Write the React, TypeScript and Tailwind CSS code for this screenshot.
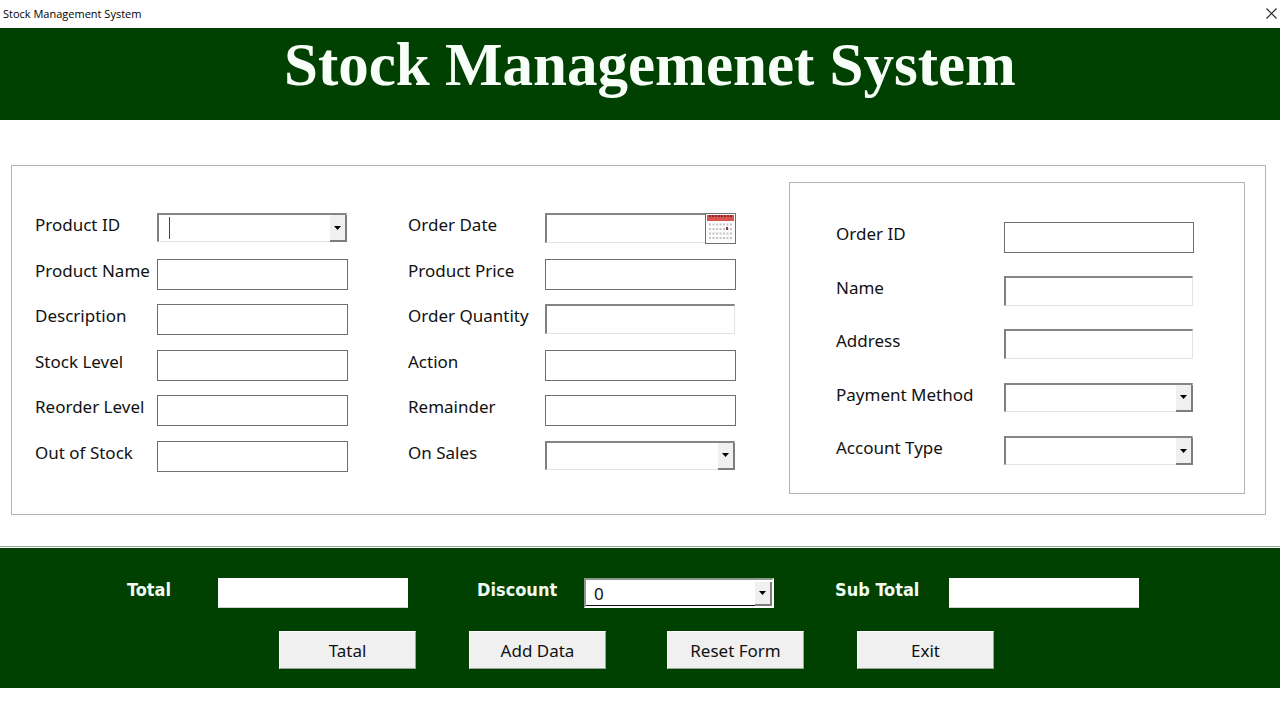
import type { ReactNode } from "react";

type Variant = "flat" | "sunken" | "select" | "date";

interface FieldDef {
  id: string;
  label: string;
  variant: Variant;
  caret?: boolean;
}

const productFields: FieldDef[] = [
  { id: "product-id", label: "Product ID", variant: "select", caret: true },
  { id: "product-name", label: "Product Name", variant: "flat" },
  { id: "description", label: "Description", variant: "flat" },
  { id: "stock-level", label: "Stock Level", variant: "flat" },
  { id: "reorder-level", label: "Reorder Level", variant: "flat" },
  { id: "out-of-stock", label: "Out of Stock", variant: "flat" },
];

const orderFields: FieldDef[] = [
  { id: "order-date", label: "Order Date", variant: "date" },
  { id: "product-price", label: "Product Price", variant: "flat" },
  { id: "order-quantity", label: "Order Quantity", variant: "sunken" },
  { id: "action", label: "Action", variant: "flat" },
  { id: "remainder", label: "Remainder", variant: "flat" },
  { id: "on-sales", label: "On Sales", variant: "select" },
];

const customerFields: FieldDef[] = [
  { id: "order-id", label: "Order ID", variant: "flat" },
  { id: "name", label: "Name", variant: "sunken" },
  { id: "address", label: "Address", variant: "sunken" },
  { id: "payment-method", label: "Payment Method", variant: "select" },
  { id: "account-type", label: "Account Type", variant: "select" },
];

const sunken =
  "border border-t-2 border-l-2 border-t-[#858585] border-l-[#808080] border-r-[#e3e3e3] border-b-[#e3e3e3]";

function DropArrow() {
  return (
    <span className="pointer-events-none absolute top-[2px] right-0 bottom-0 flex w-[17px] items-center justify-center border-r-2 border-b-2 border-[#7d7d7d] bg-[#f0f0f0]">
      <svg width="7" height="4" viewBox="0 0 7 4" aria-hidden="true">
        <path d="M0 0H7L3.5 4Z" fill="#000" />
      </svg>
    </span>
  );
}

function ComboBox({ id, caret }: { id: string; caret?: boolean }) {
  return (
    <div className="relative mr-px h-[29px]">
      <select id={id} className={`h-full w-full appearance-none bg-white px-2 outline-none ${sunken}`}>
        <option value=""></option>
      </select>
      {caret && <span className="pointer-events-none absolute top-1 left-3 h-[22px] w-px bg-[#444]" />}
      <DropArrow />
    </div>
  );
}

function CalendarIcon() {
  return (
    <svg width="29" height="29" viewBox="0 0 29 29" aria-hidden="true">
      <rect width="29" height="29" fill="#fdfdfd" />
      <rect x="1" y="1" width="27" height="6" fill="#d9534f" />
      <path d="M3 2H26" stroke="#8a2c2a" strokeWidth="2" strokeDasharray="2 1" />
      <path
        d="M3 10.5H27M3 15H27M3 19.5H27M3 24H27"
        stroke="#c4c4c4"
        strokeWidth="2"
        strokeDasharray="2 1.5"
      />
      <rect x="20" y="13" width="2" height="3" fill="#8a3a3a" />
    </svg>
  );
}

function DateBox({ id }: { id: string }) {
  return (
    <div className="flex h-[31px]">
      <input
        id={id}
        type="text"
        className="h-[30px] min-w-0 flex-1 border-t-2 border-b border-l-2 border-t-[#858585] border-b-[#e3e3e3] border-l-[#808080] bg-white px-2 outline-none"
      />
      <button type="button" aria-label="Pick a date" className="h-[31px] w-[31px] border border-[#6e6e6e] bg-white">
        <CalendarIcon />
      </button>
    </div>
  );
}

function Control({ id, variant, caret }: FieldDef) {
  if (variant === "select") return <ComboBox id={id} caret={caret} />;
  if (variant === "date") return <DateBox id={id} />;
  if (variant === "sunken") {
    return (
      <div className="pr-px">
        <input id={id} type="text" className={`block h-[30px] w-full bg-white px-2 outline-none ${sunken}`} />
      </div>
    );
  }
  return <input id={id} type="text" className="block h-[31px] w-full border border-[#6e6e6e] bg-white px-2 outline-none" />;
}

function FieldColumn({ fields, className }: { fields: FieldDef[]; className: string }) {
  return (
    <div className={`flex min-w-0 flex-col justify-between ${className}`}>
      {fields.map((field) => (
        <div key={field.id} className="flex h-[31px] items-start">
          <label htmlFor={field.id} className="w-(--label-w) shrink-0 leading-6 whitespace-nowrap">
            {field.label}
          </label>
          <div className="min-w-0 flex-1">
            <Control {...field} />
          </div>
        </div>
      ))}
    </div>
  );
}

function Summary({ id, label, labelClass, children }: { id: string; label: string; labelClass: string; children: ReactNode }) {
  return (
    <div className="flex min-w-0 items-start">
      <label
        htmlFor={id}
        className={`shrink-0 font-['DejaVu_Sans_Condensed','Noto_Sans',sans-serif] text-[18px] leading-6 font-bold whitespace-nowrap text-[#f1fbf1] ${labelClass}`}
      >
        {label}
      </label>
      {children}
    </div>
  );
}

const totalBox = "h-[30px] min-w-0 flex-1 border border-white border-b-[#c8d4c8] bg-white px-2 outline-none";
const actions = ["Tatal", "Add Data", "Reset Form", "Exit"];

export default function App() {
  return (
    <div className="min-h-screen bg-white font-['Noto_Sans',sans-serif] text-[17px] text-[#111]">
      <header className="flex h-7 items-center justify-between pr-[3px] pl-[3px] font-['Open_Sans',sans-serif] text-[11px] text-black">
        <span>Stock Management System</span>
        <button type="button" aria-label="Close" className="pb-[2px]">
          <svg width="11" height="11" viewBox="0 0 11 11" aria-hidden="true">
            <path d="M0.5 0.5L10.5 10.5M10.5 0.5L0.5 10.5" stroke="#222" strokeWidth="1.1" />
          </svg>
        </button>
      </header>

      <div className="h-[92px] bg-[#004000] pt-px pl-5 text-center">
        <h1 className="font-['Liberation_Serif',serif] text-[61px] leading-[72px] font-bold whitespace-nowrap text-[#f8fff8]">
          Stock Managemenet System
        </h1>
      </div>

      <form>
        <div className="mt-[45px] mr-[14px] mb-[31px] ml-[11px] grid grid-cols-[minmax(0,373fr)_minmax(0,381fr)_minmax(0,456fr)] border border-[#b4b4b4] pt-4 pr-5 pb-5 pl-[23px]">
          <FieldColumn fields={productFields} className="mt-[31px] mb-[22px] pr-[60px] [--label-w:122px]" />
          <FieldColumn fields={orderFields} className="mt-[31px] mb-[22px] pr-[53px] [--label-w:137px]" />
          <div className="h-[312px] border border-[#b4b4b4] pt-[39px] pr-[50px] pb-[26px] pl-[46px]">
            <FieldColumn fields={customerFields} className="h-full [--label-w:168px]" />
          </div>
        </div>

        <div className="border-t border-[#8fb08f] pt-px">
          <div className="bg-[#004000] pt-[30px] pb-[19px]">
            <div className="grid grid-cols-[minmax(0,350fr)_minmax(0,358fr)_minmax(0,304fr)] pr-[141px] pl-[127px]">
              <div className="pr-[69px]">
                <Summary id="total" label="Total" labelClass="w-[91px]">
                  <input id="total" type="text" className={totalBox} />
                </Summary>
              </div>
              <div className="pr-[61px]">
                <Summary id="discount" label="Discount" labelClass="w-[107px]">
                  <div className="relative h-[30px] min-w-0 flex-1 border-2 border-t-[#8a9a8a] border-r-white border-b-white border-l-[#8a9a8a]">
                    <select
                      id="discount"
                      defaultValue="0"
                      className="block h-[26px] w-full appearance-none border-b border-[#111] bg-white pt-[2px] pl-2 leading-6 outline-none"
                    >
                      <option value="0">0</option>
                    </select>
                    <DropArrow />
                  </div>
                </Summary>
              </div>
              <Summary id="sub-total" label="Sub Total" labelClass="w-[114px]">
                <input id="sub-total" type="text" className={totalBox} />
              </Summary>
            </div>

            <div className="mt-[23px] grid grid-cols-[190fr_198fr_190fr_137fr] pr-[286px] pl-[279px]">
              {actions.map((name) => (
                <button
                  key={name}
                  type="button"
                  className="h-[38px] w-[137px] border border-t-white border-r-[#9aa59a] border-b-[#9aa59a] border-l-white bg-[#f0f0f0] pt-[2px]"
                >
                  {name}
                </button>
              ))}
            </div>
          </div>
        </div>
      </form>
    </div>
  );
}
